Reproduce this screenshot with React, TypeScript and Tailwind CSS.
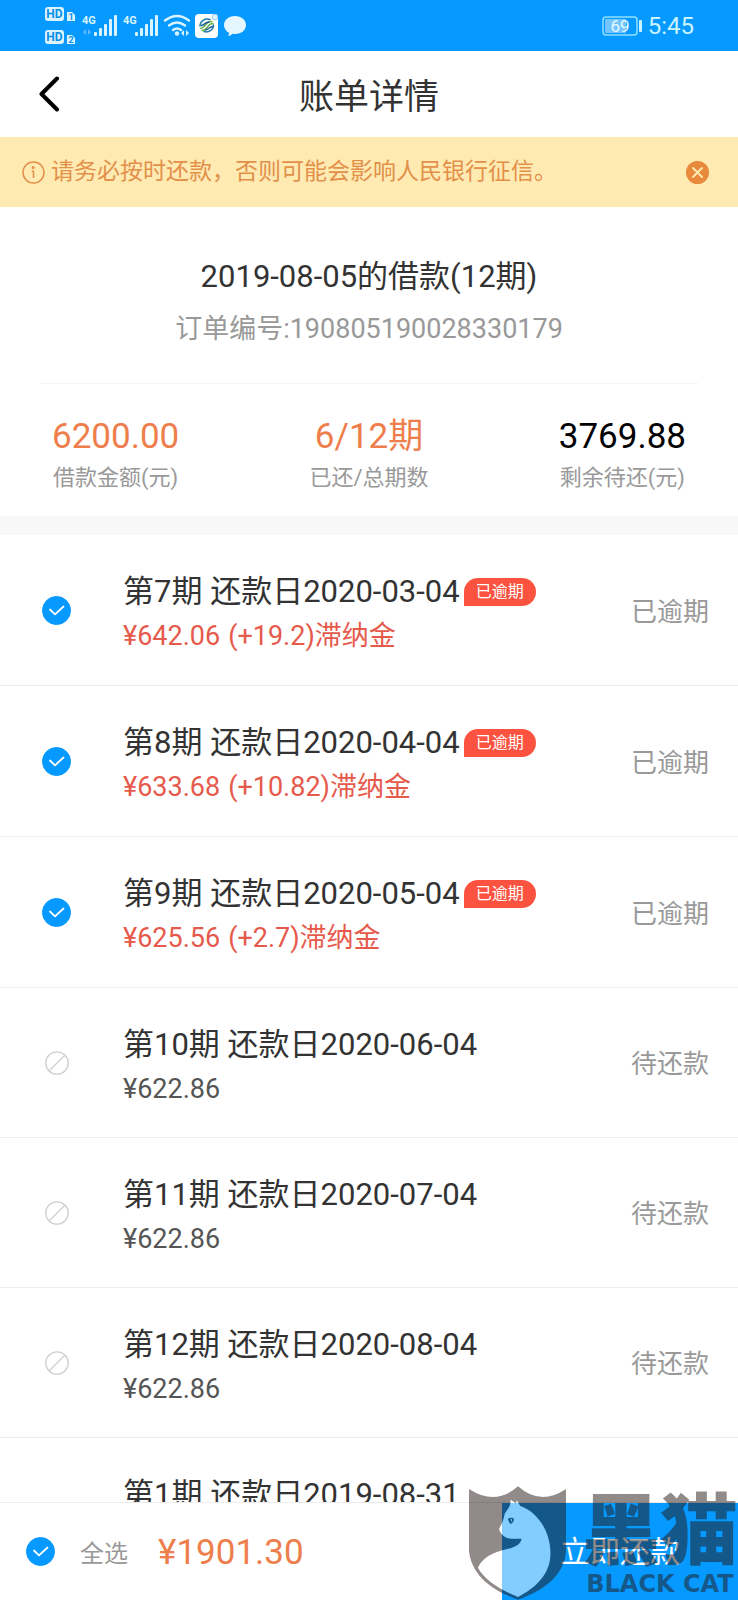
import { useState } from "react";

type Installment = {
  id: number;
  date: string;
  amount?: number;
  fee?: string;
  status?: string;
};

const installments: Installment[] = [
  { id: 7, date: "2020-03-04", amount: 642.06, fee: "19.2", status: "已逾期" },
  { id: 8, date: "2020-04-04", amount: 633.68, fee: "10.82", status: "已逾期" },
  { id: 9, date: "2020-05-04", amount: 625.56, fee: "2.7", status: "已逾期" },
  { id: 10, date: "2020-06-04", amount: 622.86, status: "待还款" },
  { id: 11, date: "2020-07-04", amount: 622.86, status: "待还款" },
  { id: 12, date: "2020-08-04", amount: 622.86, status: "待还款" },
  { id: 1, date: "2019-08-31" },
];

const overdue = installments.filter((item) => item.fee);

function Signal({ x }: { x: number }) {
  return (
    <g fill="#d9f3ff">
      <text x={x} y="24" fontSize="11" fontWeight="700">4G</text>
      <rect x={x + 12} y="32" width="3" height="4" rx="1" />
      <rect x={x + 17} y="28" width="3" height="8" rx="1" />
      <rect x={x + 22} y="24" width="3" height="12" rx="1" />
      <rect x={x + 27} y="19" width="3" height="17" rx="1" />
      <rect x={x + 32} y="15" width="3" height="21" rx="1" />
    </g>
  );
}

function StatusIcons() {
  return (
    <svg width="206" height="42" viewBox="42 5 206 42" aria-hidden="true">
      {[7, 30].map((y, i) => (
        <g key={y}>
          <rect x="45" y={y} width="19" height="14" rx="3" fill="#d9f3ff" />
          <text x="54.5" y={y + 11} fontSize="12" fontWeight="700" textAnchor="middle" fill="#0a8fe6">HD</text>
          <path d={`M67 ${y + 5}h5l3 3v6h-8z`} fill="#d9f3ff" />
          <text x="71" y={y + 13} fontSize="9" fontWeight="700" textAnchor="middle" fill="#0a8fe6">{i + 1}</text>
        </g>
      ))}
      <Signal x={82} />
      <path d="M86 29l-3 3 3 3zM88 29l3 3-3 3z" fill="#5cbcff" />
      <Signal x={123} />
      <g fill="none" stroke="#d9f3ff" strokeWidth="2.4" strokeLinecap="round">
        <path d="M165 20.500q12-9 24 0M169 25.500q8-6 16 0M173 30q4-3 8 0" />
      </g>
      <circle cx="177" cy="33.500" r="2.200" fill="#d9f3ff" />
      <path d="M184 30l-3 3 3 3zM186 30l3 3-3 3z" fill="#d9f3ff" />
      <rect x="195" y="14" width="23" height="24" rx="4" fill="#fff" />
      <g fill="none" strokeWidth="1.500" strokeLinecap="round">
        <path d="M200 26c0-5 5-8 10-6.500M213.500 25c0 5-5 8-9.500 6.500" stroke="#1f7fa8" />
        <path d="M200.500 28.500c5 0 4-7 11.500-7M202 30.500c5.500 0 5-7 11-7" stroke="#67b04a" />
        <path d="M201.500 25.500c3-.5 3.500-3.500 7.500-3.500M205.500 30c3.500-.5 3.500-3.500 7.500-3.500" stroke="#1f5f9a" />
      </g>
      <circle cx="215" cy="17" r="2.800" fill="#e6f6ff" stroke="#8fcdf5" />
      <path d="M235 16c6.500 0 11 4 11 9s-4.500 9-11 9c-1 0-1.500 0-2.500-.2-1 1.200-2.500 2-4.500 2.200.8-1 1-2 1-3.200-3-1.600-5-4.400-5-7.800 0-5 4.500-9 11-9z" fill="#e6f6ff" />
    </svg>
  );
}

function Check({ label, checked, onChange }: { label: string; checked: boolean; onChange: () => void }) {
  return (
    <span className="grid shrink-0 place-items-center">
      <input
        type="checkbox"
        aria-label={label}
        checked={checked}
        onChange={onChange}
        className="col-start-1 row-start-1 size-[29px] appearance-none rounded-full border border-[#cccccc] checked:border-[#0699ff] checked:bg-[#0699ff]"
      />
      <svg viewBox="0 0 29 29" className="pointer-events-none col-start-1 row-start-1 size-[29px]" aria-hidden="true">
        <path d="M8 13.500l5 4.800 8.500-7.800" fill="none" stroke="#fff" strokeWidth="1.800" strokeLinecap="round" strokeLinejoin="round" />
      </svg>
    </span>
  );
}

function Unavailable({ label }: { label: string }) {
  return (
    <span className="grid size-[29px] shrink-0 place-items-center">
      <input type="checkbox" disabled aria-label={label} className="col-start-1 row-start-1 size-6 appearance-none rounded-full" />
      <svg viewBox="0 0 24 24" className="pointer-events-none col-start-1 row-start-1 size-6" aria-hidden="true">
        <path d="M4.500 19.500l15-15" stroke="#cfcfcf" strokeWidth="1.300" />
        <circle cx="12" cy="12" r="11.200" fill="none" stroke="#cfcfcf" strokeWidth="1.300" />
      </svg>
    </span>
  );
}

function Stat({ value, label, tone }: { value: string; label: string; tone: string }) {
  return (
    <div className="flex flex-col items-center">
      <dd className={`text-[35px] leading-[42px] ${tone}`}>{value}</dd>
      <dt className="text-[22px] leading-10 text-[#999999]">{label}</dt>
    </div>
  );
}

function Watermark() {
  return (
    <div className="pointer-events-none absolute right-0 bottom-0 flex items-end gap-4 opacity-50" aria-hidden="true">
      <svg width="97" height="114" viewBox="88 135 291 342">
        <path d="M88 144Q168 196 235 136Q302 196 379 144V330C374 405 310 450 235 476C160 450 96 405 88 330Z" fill="#231815" />
        <path
          d="M213 176L229 187L231 178L242 195C298 214 336 280 332 345C329 402 288 440 235 468C186 448 134 418 115 380C128 350 160 334 200 325C226 318 242 312 246 293C226 294 210 294 200 290C190 285 181 276 178 264C186 250 192 236 195 218C201 206 213 200 213 176Z"
          fill="#fff"
        />
        <path d="M205 233q10-6 18 0-1 12-10 16-6-4-8-16z" fill="#231815" />
        <path d="M213 234l4 0-2 11z" fill="#fff" />
      </svg>
      <div className="flex flex-col items-center text-[#231815]">
        <span className="text-[78px] leading-[74px] font-black">黑猫</span>
        <span className="pb-0.5 font-['DejaVu_Sans'] text-2xl leading-7 font-bold whitespace-nowrap">BLACK CAT</span>
      </div>
    </div>
  );
}

export default function App() {
  const [selected, setSelected] = useState<number[]>(overdue.map((item) => item.id));
  const [notice, setNotice] = useState(true);
  const total = overdue
    .filter((item) => selected.includes(item.id))
    .reduce((sum, item) => sum + (item.amount ?? 0), 0);
  const allSelected = selected.length === overdue.length;

  const toggle = (id: number) =>
    setSelected((ids) => (ids.includes(id) ? ids.filter((other) => other !== id) : [...ids, id]));

  return (
    <div className="relative flex h-screen flex-col overflow-hidden bg-white font-['Roboto','Noto_Sans_CJK_SC',sans-serif] text-[#333333]">
      <div className="flex h-[51px] shrink-0 items-center justify-between bg-[#0699ff] pr-11 pl-[42px]">
        <StatusIcons />
        <div className="flex items-center gap-1.5 text-[#c9f3ff]">
          <svg width="40" height="20" viewBox="0 0 40 20" aria-hidden="true">
            <rect x="1" y="1" width="34" height="18" rx="3" fill="none" stroke="#8fe0ff" strokeWidth="1.500" />
            <rect x="3" y="3" width="21" height="14" rx="1" fill="#74c5ff" />
            <rect x="37" y="4" width="3" height="12" rx="1" fill="#c9f3ff" />
            <text x="18" y="16" fontSize="17" textAnchor="middle" fill="#e4f8ff">69</text>
          </svg>
          <span className="text-2xl">5:45</span>
        </div>
      </div>

      <header className="grid h-[86px] shrink-0 grid-cols-[1fr_auto_1fr] items-center">
        <button type="button" aria-label="返回" className="justify-self-start pl-[38px]">
          <svg width="22" height="36" viewBox="0 0 22 36" aria-hidden="true">
            <path d="M19 2.500L3.500 18L19 33.500" fill="none" stroke="#000" strokeWidth="4" strokeLinecap="round" strokeLinejoin="round" />
          </svg>
        </button>
        <h1 className="pt-2 text-[35px] leading-[50px]">账单详情</h1>
      </header>

      {notice && (
        <div className="flex h-[70px] shrink-0 items-center justify-between bg-[#ffeab2] pr-[29px] pl-[22px] text-[#e2904a]">
          <p className="flex items-center gap-1.5 text-[23px]">
            <svg width="23" height="23" viewBox="0 0 23 23" fill="none" stroke="currentColor" strokeWidth="1.500" aria-hidden="true">
              <circle cx="11.500" cy="11.500" r="10.500" />
              <path d="M11.500 10v7M9.800 10h1.700" />
              <circle cx="11.200" cy="6.500" r=".8" fill="currentColor" />
            </svg>
            请务必按时还款，否则可能会影响人民银行征信。
          </p>
          <button type="button" aria-label="关闭" onClick={() => setNotice(false)}>
            <svg width="23" height="23" viewBox="0 0 23 23" aria-hidden="true">
              <circle cx="11.500" cy="11.500" r="11.500" fill="#e8893c" />
              <path d="M7 7l9 9M16 7l-9 9" stroke="#ffeab2" strokeWidth="1.900" strokeLinecap="round" />
            </svg>
          </button>
        </div>
      )}

      <main className="min-h-0 flex-1 overflow-y-auto [scrollbar-width:none]">
        <section className="px-10 text-center">
          <div className="border-b border-[#f5f5f5] pt-12 pb-8">
            <h2 className="text-[31px] leading-[44px]">2019-08-05的借款(12期)</h2>
            <p className="mt-2 text-[27px] leading-[44px] text-[#999999]">订单编号:190805190028330179</p>
          </div>
          <dl className="flex justify-between px-3 pt-8 pb-[18px]">
            <Stat value="6200.00" label="借款金额(元)" tone="text-[#ee7e4c]" />
            <Stat value="6/12期" label="已还/总期数" tone="text-[#ee7e4c]" />
            <Stat value="3769.88" label="剩余待还(元)" tone="text-black" />
          </dl>
        </section>

        <ul className="border-t-[19px] border-[#f8f8f8]">
          {installments.map((item) => (
            <li
              key={item.id}
              className={`flex items-center border-b border-[#ececec] pr-[29px] pl-[42px] ${item.fee ? "h-[151px]" : "h-[150px]"}`}
            >
              {item.fee && (
                <Check label={`第${item.id}期`} checked={selected.includes(item.id)} onChange={() => toggle(item.id)} />
              )}
              {!item.fee && item.amount && <Unavailable label={`第${item.id}期`} />}
              {!item.amount && <span className="w-[29px]" />}
              <div className="ml-[52px] h-20 flex-1">
                <div className="flex items-center gap-1 text-[31px] leading-[44px]">
                  <span>第{item.id}期 还款日{item.date}</span>
                  {item.fee && (
                    <span className="rounded-t-full rounded-br-full bg-[#fc5240] px-3 text-base leading-7 text-white">已逾期</span>
                  )}
                </div>
                {item.amount && (
                  <p className={`text-[27px] leading-[44px] ${item.fee ? "text-[#e65a4c]" : "text-[#555555]"}`}>
                    ¥{item.amount.toFixed(2)}
                    {item.fee && <span className="ml-2">(+{item.fee})滞纳金</span>}
                  </p>
                )}
              </div>
              <span className="pt-1 text-[26px] text-[#999999]">{item.status}</span>
            </li>
          ))}
        </ul>
      </main>

      <footer className="flex h-[98px] shrink-0 items-stretch border-t border-[#ececec] bg-white">
        <div className="flex flex-1 items-center pl-[26px]">
          <Check
            label="全选"
            checked={allSelected}
            onChange={() => setSelected(allSelected ? [] : overdue.map((item) => item.id))}
          />
          <span className="ml-[25px] pt-1 text-2xl text-[#999999]">全选</span>
          <output className="ml-[30px] pt-1 text-[35px] text-[#ee7e4c]">¥{total.toFixed(2)}</output>
        </div>
        <button type="button" className="w-[236px] bg-[#0699ff] text-[30px] text-white">立即还款</button>
      </footer>

      <Watermark />
    </div>
  );
}
